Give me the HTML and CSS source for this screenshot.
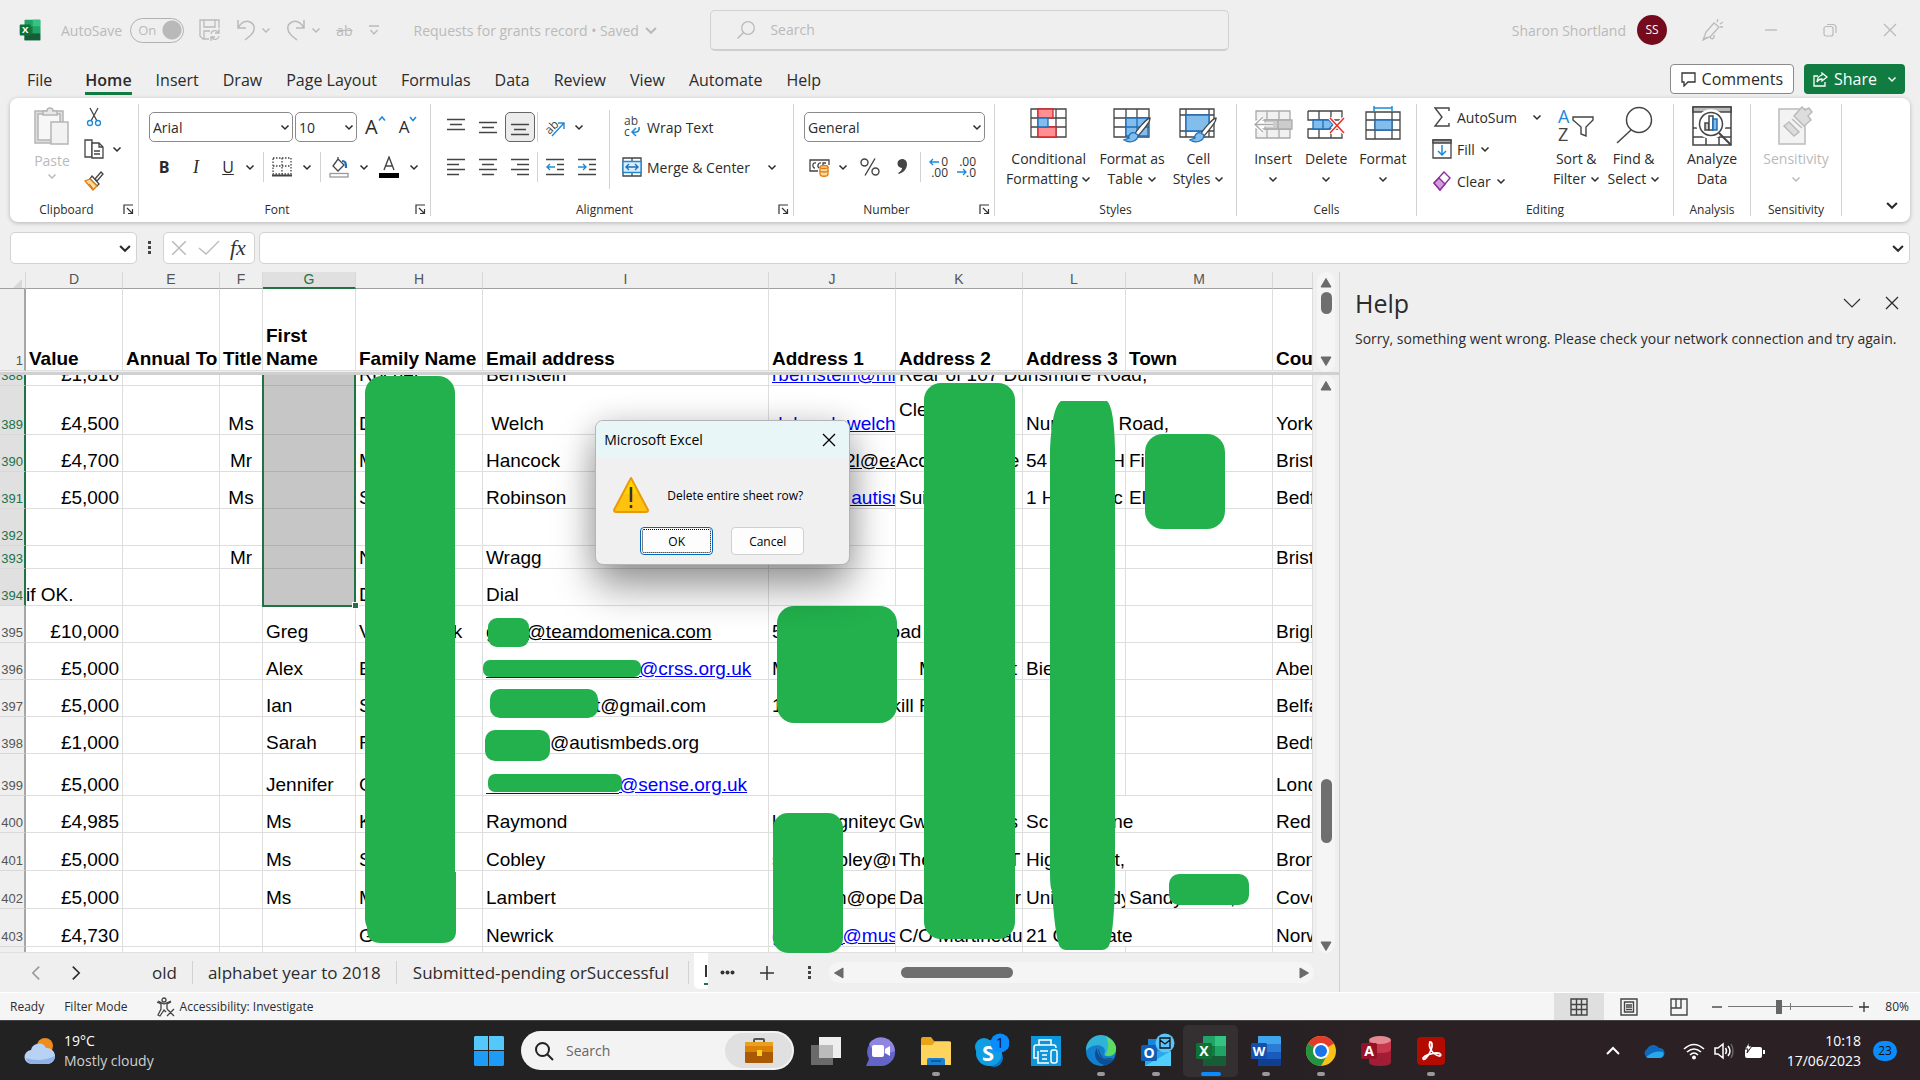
FILE: index.html
```html
<!DOCTYPE html>
<html lang="en">
  <head>
    <meta charset="UTF-8" />
    <meta name="viewport" content="width=device-width, initial-scale=1.0" />
    <title>Requests for grants record - Excel</title>
    <link rel="stylesheet" href="styles.css">
  </head>
  <body>
    <!-- shared icons -->
    <svg class="defs" width="0" height="0" aria-hidden="true">
      <symbol id="chev" viewBox="0 0 10 10"><path d="M1.5 3.5 5 7l3.5-3.5" fill="none" stroke="currentColor" stroke-width="1.5" /></symbol>
      <symbol id="thin" viewBox="0 0 10 10"><path d="M1 3 5 7l4-4" fill="none" stroke="currentColor" stroke-width="1" /></symbol>
      <symbol id="cross" viewBox="0 0 16 16"><path d="M2 2l12 12M14 2 2 14" fill="none" stroke="currentColor" stroke-width="1.3" /></symbol>
      <symbol id="launch" viewBox="0 0 11 11"><path d="M1 10V1h9M4 4l5 5M9.500 5v4.500H5" fill="none" stroke="#333" stroke-width="1.2" /></symbol>
      <symbol id="lens" viewBox="0 0 20 20"><circle cx="12" cy="8" r="6.300" fill="none" stroke="currentColor" stroke-width="1.300" /><path d="M7.500 12.500 1.500 18.500" stroke="currentColor" stroke-width="1.500" /></symbol>
      <symbol id="up" viewBox="0 0 12 12"><path d="M6 1.500 11 10H1z" fill="#6b6b6b" stroke="#6b6b6b" stroke-linejoin="round" /></symbol>
      <symbol id="excel" viewBox="0 0 32 32">
        <path d="M9 1h21a1 1 0 0 1 1 1v28a1 1 0 0 1-1 1H9a1 1 0 0 1-1-1V2a1 1 0 0 1 1-1z" fill="#21a366" />
        <path d="M20 1h11v10H20z" fill="#33c481" /><path d="M8 11h12v10H8z" fill="#107c41" /><path d="M20 11h11v10H20z" fill="#21a366" /><path d="M8 21h23v10H8z" fill="#185c37" />
        <rect x="1" y="8" width="16" height="16" rx="1.500" fill="#0f7038" />
        <text x="9" y="21" font-size="14" font-weight="700" fill="#fff" text-anchor="middle">X</text>
      </symbol>
    </svg>

    <header class="titlebar">
      <div class="quick">
        <svg width="22" height="22"><use href="#excel" /></svg>
        <label class="autosave">AutoSave
          <span class="switch"><input type="checkbox" checked /><span>On</span></span>
        </label>
        <button aria-label="Save"><svg width="22" height="22" viewBox="0 0 22 22" fill="none" stroke="currentColor" stroke-width="1.300"><path d="M10 20H4l-3-3V1h19v8M5 1v7h11V1M5 20v-8h6M12 15a4 4 0 0 1 7-2l1 1M20 10v4h-4M20 17a4 4 0 0 1-7 2l-1-1M12 22v-4h4" /></svg></button>
        <button aria-label="Undo"><svg width="20" height="22" viewBox="0 0 20 22" fill="none" stroke="currentColor" stroke-width="1.500"><path d="M2 1v8h8M2 9C5 4 9 1 14 3c6 3 5 9 1 13l-6 5" /></svg><svg width="10" height="10"><use href="#chev" /></svg></button>
        <button aria-label="Redo"><svg width="20" height="22" viewBox="0 0 20 22" fill="none" stroke="currentColor" stroke-width="1.500"><path d="M18 1v8h-8M18 9C15 4 11 1 6 3c-6 3-5 9-1 13l6 5" /></svg><svg width="10" height="10"><use href="#chev" /></svg></button>
        <button class="strike">ab</button>
        <button aria-label="Customize"><svg width="12" height="12" viewBox="0 0 12 12" fill="none" stroke="currentColor" stroke-width="1.300"><path d="M1 2h10M2.500 6 6 10l3.500-4" /></svg></button>
        <button class="docname">Requests for grants record • Saved <svg width="14" height="14"><use href="#chev" /></svg></button>
      </div>
      <label class="search"><svg width="20" height="20"><use href="#lens" /></svg><input type="search" placeholder="Search" /></label>
      <div class="window-tools">
        <span>Sharon Shortland</span>
        <span class="avatar">SS</span>
        <button aria-label="Draw"><svg width="22" height="22" viewBox="0 0 22 22" fill="none" stroke="currentColor" stroke-width="1.300"><path d="M13 4l5 4-8 9-8 4 3-8zM2 21l4-3M9 18c1 3 5 2 4-2M16 3l1-3M19 5l3-2M19 8h3" /></svg></button>
        <button aria-label="Minimize"><svg width="14" height="14" viewBox="0 0 14 14"><path d="M1 7h12" stroke="currentColor" stroke-width="1.300" /></svg></button>
        <button aria-label="Restore"><svg width="14" height="14" viewBox="0 0 14 14" fill="none" stroke="currentColor" stroke-width="1.200"><rect x="1" y="3.500" width="9" height="9.500" rx="2" /><path d="M4 1.500h6a3 3 0 0 1 3 3V10" /></svg></button>
        <button aria-label="Close"><svg width="16" height="16"><use href="#cross" /></svg></button>
      </div>
    </header>

    <nav class="tabs">
      <a href="#" class="file">File</a><a href="#" class="active">Home</a><a href="#">Insert</a><a href="#">Draw</a><a href="#">Page Layout</a><a href="#">Formulas</a><a href="#">Data</a><a href="#">Review</a><a href="#">View</a><a href="#">Automate</a><a href="#">Help</a>
      <div class="tab-actions">
        <button class="comments"><svg width="15" height="15" viewBox="0 0 15 15" fill="none" stroke="#333" stroke-width="1.300"><path d="M1 1h13v9H7l-4 4v-4H1z" /></svg>Comments</button>
        <button class="share"><svg width="15" height="15" viewBox="0 0 15 15" fill="none" stroke="#fff" stroke-width="1.300"><path d="M5 4H1v10h11v-4M9 1l5 4-5 4V7C6 7 5 8 4 10c0-4 2-6 5-7z" /></svg>Share<svg class="drop" width="10" height="10"><use href="#chev" /></svg></button>
      </div>
    </nav>

    <section class="ribbon">
      <div class="group clipboard">
        <div class="body">
          <button class="big off"><svg width="36" height="40" viewBox="0 0 36 40" fill="#e8e8e8" stroke="#b5b5b5" stroke-width="1.500"><path d="M1 5h28v32H1z" fill="#dedede" /><path d="M4 8h22v26H4z" fill="#f7f7f7" /><path d="M9 9V5h4a3 3 0 0 1 6 0h4v4z" /><path d="M17 16h17v22H17z" fill="#f2f2f2" /></svg>Paste<svg width="10" height="10"><use href="#chev" /></svg></button>
          <div class="stack">
            <button aria-label="Cut"><svg width="20" height="20" viewBox="0 0 20 20" fill="none" stroke="#444" stroke-width="1.300"><path d="M6 1l7 13M14 1 7 14" /><circle cx="6" cy="16" r="2.500" stroke="#1e8ad6" /><circle cx="14" cy="16" r="2.500" stroke="#1e8ad6" /></svg></button>
            <button aria-label="Copy"><svg width="20" height="20" viewBox="0 0 20 20" fill="#fff" stroke="#444" stroke-width="1.300"><path d="M1 1h7v17H1z" /><path d="M8 4h7l4 4v11H8zM15 4v4h4" /><path d="M10 12h6M10 15h6" /></svg><svg width="10" height="10"><use href="#chev" /></svg></button>
            <button aria-label="Format Painter"><svg width="20" height="20" viewBox="0 0 20 20" fill="#fff" stroke="#444" stroke-width="1.300"><path d="M11 8l6-7 2 2-6 7z" /><path d="M8 5l7 8-2 2-7-7z" /><path d="M6 8l7 7-4 4L1 10z" fill="#fbdc9a" stroke="#e07a10" /><path d="M5 13l4 5" stroke="#e07a10" /></svg></button>
          </div>
        </div>
        <footer>Clipboard<button aria-label="Clipboard settings"><svg width="11" height="11"><use href="#launch" /></svg></button></footer>
      </div>

      <div class="group font">
        <div class="body rows">
          <div class="row">
            <span class="combo wide"><select aria-label="Font"><option>Arial</option></select><svg width="10" height="10"><use href="#chev" /></svg></span>
            <span class="combo size"><select aria-label="Font size"><option>10</option></select><svg width="10" height="10"><use href="#chev" /></svg></span>
            <button class="grow">A<svg width="8" height="8" viewBox="0 0 8 8"><path d="M1 5.500 4 2l3 3.500" fill="none" stroke="#1e8ad6" stroke-width="1.500" /></svg></button>
            <button class="grow small">A<svg width="8" height="8" viewBox="0 0 8 8"><path d="M1 2l3 3.500L7 2" fill="none" stroke="#1e8ad6" stroke-width="1.500" /></svg></button>
          </div>
          <div class="row letters">
            <button class="b">B</button><button class="i">I</button><button class="u">U</button><svg width="10" height="10"><use href="#chev" /></svg><i class="bar"></i>
            <button aria-label="Borders"><svg width="20" height="20" viewBox="0 0 20 20" fill="none" stroke="#444" stroke-width="1.300"><path d="M1 1h18v16H1zM10 1v16M1 9h18" stroke-dasharray="1.500 1.500" /><path d="M0 18.500h20" stroke-width="2" /></svg></button><svg width="10" height="10"><use href="#chev" /></svg><i class="bar"></i>
            <button aria-label="Fill Color"><svg width="20" height="22" viewBox="0 0 20 22" fill="none" stroke="#444" stroke-width="1.300"><path d="M9 3l6 6-6 6-5-5zM9 3V1" /><path d="M13 5c4 0 4 3 4 7" stroke="#1e6fb8" stroke-width="2.200" /><rect x="1" y="17.500" width="18" height="3.500" stroke="#999" /></svg></button><svg width="10" height="10"><use href="#chev" /></svg>
            <button aria-label="Font Color"><svg width="20" height="22" viewBox="0 0 20 22"><path d="M5 14 10 1l5 13M7 10h6" fill="none" stroke="#444" stroke-width="1.400" /><path d="M0 17h20v5H0z" /></svg></button><svg width="10" height="10"><use href="#chev" /></svg>
          </div>
        </div>
        <footer>Font<button aria-label="Font settings"><svg width="11" height="11"><use href="#launch" /></svg></button></footer>
      </div>

      <div class="group alignment">
        <div class="body">
          <div class="rows">
            <div class="row lines">
              <button aria-label="Top"><svg width="18" height="18" viewBox="0 0 18 18"><path d="M0 1.500h18M3 6.500h12M0 11.500h18" stroke="#444" stroke-width="1.300" /></svg></button>
              <button aria-label="Middle"><svg width="18" height="18" viewBox="0 0 18 18"><path d="M0 4.500h18M3 9.500h12M0 14.500h18" stroke="#444" stroke-width="1.300" /></svg></button>
              <button aria-label="Bottom" class="on"><svg width="18" height="20" viewBox="0 0 18 20"><path d="M0 7.500h18M3 12.500h12M0 17.500h18" stroke="#444" stroke-width="1.300" /></svg></button>
              <i class="bar"></i>
              <button aria-label="Orientation"><svg width="20" height="20" viewBox="0 0 20 20"><text x="0" y="15" font-size="12" fill="#444" transform="rotate(-45 6 11)">ab</text><path d="M7 19 19 6M13 6h6v6" fill="none" stroke="#1e8ad6" stroke-width="1.400" /></svg></button><svg width="10" height="10"><use href="#chev" /></svg>
            </div>
            <div class="row lines">
              <button aria-label="Left"><svg width="18" height="18" viewBox="0 0 18 18"><path d="M0 1.500h18M0 6.500h12M0 11.500h18M0 16.500h12" stroke="#444" stroke-width="1.300" /></svg></button>
              <button aria-label="Center"><svg width="18" height="18" viewBox="0 0 18 18"><path d="M0 1.500h18M3 6.500h12M0 11.500h18M3 16.500h12" stroke="#444" stroke-width="1.300" /></svg></button>
              <button aria-label="Right"><svg width="18" height="18" viewBox="0 0 18 18"><path d="M0 1.500h18M6 6.500h12M0 11.500h18M6 16.500h12" stroke="#444" stroke-width="1.300" /></svg></button>
              <i class="bar"></i>
              <button aria-label="Decrease indent"><svg width="18" height="18" viewBox="0 0 18 18"><path d="M0 1.500h18M11 6.500h7M11 11.500h7M0 16.500h18" stroke="#444" stroke-width="1.300" /><path d="M9 9H1M4 6 1 9l3 3" fill="none" stroke="#1e8ad6" stroke-width="1.400" /></svg></button>
              <button aria-label="Increase indent"><svg width="18" height="18" viewBox="0 0 18 18"><path d="M0 1.500h18M11 6.500h7M11 11.500h7M0 16.500h18" stroke="#444" stroke-width="1.300" /><path d="M0 9h8M5 6l3 3-3 3" fill="none" stroke="#1e8ad6" stroke-width="1.400" /></svg></button>
            </div>
          </div>
          <div class="rows wrap">
            <button class="row"><svg width="20" height="22" viewBox="0 0 20 22"><text x="2" y="9" font-size="12" fill="#444">ab</text><text x="2" y="20" font-size="12" fill="#444">c</text><path d="M17 11c1 4-2 6-6 5M14 12l-4 4 4 4" fill="none" stroke="#1e8ad6" stroke-width="1.500" /></svg>Wrap Text</button>
            <button class="row"><svg width="20" height="20" viewBox="0 0 20 20" fill="none" stroke="#444" stroke-width="1.300"><path d="M1 1h18v18H1zM10 1v3M10 16v3" /><path d="M1 4.500h18v11H1z" fill="#d9edfb" stroke="#1e8ad6" /><path d="M4 10h12M7 7l-3 3 3 3M13 7l3 3-3 3" stroke="#1e6fb8" /></svg>Merge &amp; Center<svg class="drop" width="10" height="10"><use href="#chev" /></svg></button>
          </div>
        </div>
        <footer>Alignment<button aria-label="Alignment settings"><svg width="11" height="11"><use href="#launch" /></svg></button></footer>
      </div>

      <div class="group number">
        <div class="body rows">
          <div class="row"><span class="combo format"><select aria-label="Number format"><option>General</option></select><svg width="10" height="10"><use href="#chev" /></svg></span></div>
          <div class="row nums">
            <button aria-label="Accounting"><svg width="21" height="20" viewBox="0 0 21 20" fill="none" stroke="#444" stroke-width="1.300"><path d="M9 14H1V3h19v5M7 6C3 5 3 11 6 11M12 6c-3-1-4 4-2 5M17 6h-3v3" /><path d="M11 10v7c0 3 8 3 8 0v-7" fill="#fbdc9a" stroke="#e07a10" /><ellipse cx="15" cy="10" rx="4" ry="1.500" fill="#fbdc9a" stroke="#e07a10" /><path d="M11 13.500c0 2 8 2 8 0" stroke="#e07a10" /></svg></button><svg width="10" height="10"><use href="#chev" /></svg>
            <button class="pct" aria-label="Percent"><svg width="20" height="20" viewBox="0 0 20 20" fill="none" stroke="#444" stroke-width="1.400"><circle cx="4.500" cy="5.500" r="3.500" /><circle cx="15.500" cy="14.500" r="3.500" /><path d="M15 1.500 5 18.500" /></svg></button>
            <button class="comma" aria-label="Comma"><svg width="12" height="18" viewBox="0 0 12 18"><path d="M6 1c6 0 7 8 1 13l-4 2-1-1c3-2 4-3 4-5C0 10 0 1 6 1z" fill="#444" /></svg></button>
            <i class="bar"></i>
            <button aria-label="Increase decimal"><svg width="20" height="22" viewBox="0 0 20 22"><path d="M10 6H1M4 3 1 6l3 3" fill="none" stroke="#1e8ad6" stroke-width="1.400" /><text x="19" y="10" font-size="12" fill="#333" text-anchor="end">0</text><text x="19" y="21" font-size="12" fill="#333" text-anchor="end">.00</text></svg></button>
            <button aria-label="Decrease decimal"><svg width="20" height="22" viewBox="0 0 20 22"><path d="M0 16h9M6 13l3 3-3 3" fill="none" stroke="#1e8ad6" stroke-width="1.400" /><text x="19" y="10" font-size="12" fill="#333" text-anchor="end">.00</text><text x="19" y="21" font-size="12" fill="#333" text-anchor="end">.0</text></svg></button>
          </div>
        </div>
        <footer>Number<button aria-label="Number settings"><svg width="11" height="11"><use href="#launch" /></svg></button></footer>
      </div>

      <div class="group styles">
        <div class="body">
          <button class="big"><svg width="38" height="38" viewBox="0 0 38 38" fill="none" stroke="#444" stroke-width="1.300"><path d="M1 3h35v28H1zM1 12h35M1 21h35M8 3v28M26 3v28" /><path d="M8 3h15v9H8zM8 21h18v10H8z" fill="#ff8f92" stroke="#d8252b" /><path d="M8 12h10v9H8z" fill="#83bdeb" stroke="#1e6fb8" /></svg>Conditional<br>Formatting <svg width="10" height="10"><use href="#chev" /></svg></button>
          <button class="big"><svg width="38" height="38" viewBox="0 0 38 38" fill="none" stroke="#444" stroke-width="1.300"><path d="M1 3h35v28H1zM13 3v28M24 3v9M1 12h35M1 21h35" /><path d="M13 12h22v18H13zM24 12v18M13 21h22" fill="#83bdeb" stroke="#1e6fb8" /><path d="M37 12c-3 0-14 13-15 16l3 2c4-5 13-14 12-18z" fill="#fff" /><path d="M22 27c-5-2-7 4-6 5l-5 2c6 4 14 1 14-5z" fill="#83bdeb" stroke="#1e6fb8" /></svg>Format as<br>Table <svg width="10" height="10"><use href="#chev" /></svg></button>
          <button class="big"><svg width="38" height="38" viewBox="0 0 38 38" fill="none" stroke="#444" stroke-width="1.300"><path d="M1 3h34v28H1zM7 3v28M30 3v28M1 9h34M1 25h34" /><path d="M7 9h23v16H7z" fill="#83bdeb" stroke="#1e6fb8" /><path d="M37 12c-3 0-14 13-15 16l3 2c4-5 13-14 12-18z" fill="#fff" /><path d="M22 27c-5-2-7 4-6 5l-5 2c6 4 14 1 14-5z" fill="#83bdeb" stroke="#1e6fb8" /></svg>Cell<br>Styles <svg width="10" height="10"><use href="#chev" /></svg></button>
        </div>
        <footer>Styles</footer>
      </div>

      <div class="group cells">
        <div class="body">
          <button class="big"><svg width="40" height="38" viewBox="0 0 40 38" fill="#f1f1f1" stroke="#aaa" stroke-width="1.300"><path d="M3 5h34v9H3zM3 23h34v9H3zM14 5v9M26 5v9M14 23v9M26 23v9" /><path d="M12 14h27v9H12zM25 14v9" fill="#ccc" /><path d="M20 18.500H2M10 11l-8 7.500 8 7.500" fill="none" stroke="#fff" stroke-width="4" /><path d="M20 18.500H2M10 11l-8 7.500 8 7.500" fill="none" /></svg>Insert<br><svg width="10" height="10"><use href="#chev" /></svg></button>
          <button class="big"><svg width="40" height="38" viewBox="0 0 40 38" fill="none" stroke="#444" stroke-width="1.300"><path d="M2 5h34v9M2 5v9h34M2 32v-9h34M2 32h34v-9M13 5v9M25 5v9M13 23v9M25 23v9" /><path d="M7 14h16l4 4.500-4 4.500H7zM17 14v9" fill="#83bdeb" stroke="#1e6fb8" /><path d="M24 12l14 15M38 12 24 27" stroke="#fff" stroke-width="4" /><path d="M24 12l14 15M38 12 24 27" stroke="#e8332c" stroke-width="1.600" /></svg>Delete<br><svg width="10" height="10"><use href="#chev" /></svg></button>
          <button class="big"><svg width="40" height="38" viewBox="0 0 40 38" fill="none" stroke="#444" stroke-width="1.300"><path d="M3 6h34v27H3zM3 14h34M3 24h34M12 6v27M29 6v27" /><path d="M12 14h17v10H12z" fill="#83bdeb" stroke="#1e6fb8" /><path d="M11 2h18M11 0v5M29 0v5" stroke="#1e8ad6" stroke-width="1.500" /></svg>Format<br><svg width="10" height="10"><use href="#chev" /></svg></button>
        </div>
        <footer>Cells</footer>
      </div>

      <div class="group editing">
        <div class="body">
          <div class="stack text">
            <button><svg width="20" height="20" viewBox="0 0 20 20" fill="none" stroke="#444" stroke-width="1.400"><path d="M17 4V1H3l7 9-7 9h14v-3" /></svg>AutoSum<svg class="drop" width="10" height="10"><use href="#chev" /></svg></button>
            <button><svg width="20" height="20" viewBox="0 0 20 20" fill="none" stroke="#444" stroke-width="1.300"><path d="M1 1h18v18H1z" /><path d="M1 1h18v3H1z" fill="#aaa" /><path d="M10 6v10M6 12l4 4 4-4" stroke="#1e8ad6" stroke-width="1.500" /></svg>Fill<svg width="10" height="10"><use href="#chev" /></svg></button>
            <button><svg width="20" height="20" viewBox="0 0 20 20" fill="none" stroke="#8a2f9b" stroke-width="1.400"><path d="M12 1l6 6-10 12-6-7z" /><path d="M7 7l6 6-5 6-6-7z" fill="#d59be0" /></svg>Clear<svg width="10" height="10"><use href="#chev" /></svg></button>
          </div>
          <button class="big"><svg width="38" height="38" viewBox="0 0 38 38"><text x="1" y="17" font-size="18" fill="#1e8ad6">A</text><text x="1" y="35" font-size="18" fill="#444">Z</text><path d="M16 11h20v3l-7 7v9l-5-2v-7l-8-7z" fill="none" stroke="#444" stroke-width="1.400" /></svg>Sort &amp;<br>Filter <svg width="10" height="10"><use href="#chev" /></svg></button>
          <button class="big"><svg width="38" height="38" viewBox="0 0 38 38" fill="none" stroke="#444" stroke-width="1.500"><circle cx="24" cy="14" r="12.500" /><path d="M16 24 2 37" /></svg>Find &amp;<br>Select <svg width="10" height="10"><use href="#chev" /></svg></button>
        </div>
        <footer>Editing</footer>
      </div>

      <div class="group analysis">
        <div class="body">
          <button class="big"><svg width="40" height="40" viewBox="0 0 40 40" fill="none" stroke="#444" stroke-width="1.500"><path d="M1 1h38v38H1zM1 22h38M1 31h38M14 22v17M27 22v17" /><path d="M1 1h38v5H1z" fill="#bbb" /><circle cx="19" cy="18" r="14" fill="#fff" stroke="#fff" /><circle cx="19" cy="18" r="11.500" fill="#fff" /><path d="M27 27l12 12" stroke-width="2" /><path d="M13 17h4v7h-4z" fill="#ccc" /><path d="M17 10h4v14h-4z" fill="#fff" /><path d="M21 13h4v11h-4z" fill="#83bdeb" stroke="#1e6fb8" /></svg>Analyze<br>Data</button>
        </div>
        <footer>Analysis</footer>
      </div>

      <div class="group sensitivity">
        <div class="body">
          <button class="big off"><svg width="36" height="40" viewBox="0 0 36 40" fill="#f3f3f3" stroke="#bbb" stroke-width="1.500"><path d="M1 3h26v35H1z" /><path d="M6 20l5-4 10 10-5 4z" fill="#ddd" /><path d="M16 10l8-9 3 3 4-2 3 4-4 4 3 4-7 6z" fill="#ddd" /><path d="M14 13l10 9" /></svg>Sensitivity<br><svg width="10" height="10"><use href="#chev" /></svg></button>
        </div>
        <footer>Sensitivity</footer>
      </div>
      <button class="collapse" aria-label="Collapse ribbon"><svg width="14" height="14"><use href="#chev" /></svg></button>
    </section>

    <section class="formula-bar">
      <label class="name-box"><input type="text" aria-label="Name box" /><svg width="14" height="14"><use href="#chev" /></svg></label>
      <svg width="6" height="16" viewBox="0 0 6 16"><path d="M1 1h3v3H1zM1 6h3v3H1zM1 11h3v3H1z" fill="#444" /></svg>
      <div class="fx-box">
        <button aria-label="Cancel entry"><svg width="18" height="18"><use href="#cross" /></svg></button>
        <button aria-label="Enter"><svg width="22" height="18" viewBox="0 0 22 18"><path d="M1 9l7 6L21 2" fill="none" stroke="currentColor" stroke-width="1.300" /></svg></button>
        <button class="fx">fx</button>
      </div>
      <label class="formula"><input type="text" aria-label="Formula" /><svg width="14" height="14"><use href="#chev" /></svg></label>
    </section>

    <main class="workspace">
      <div class="book">
        <div class="panes">
          <div class="pane top">
            <div class="grid">
              <table>
                <colgroup><col class="c-num"><col class="c-d"><col class="c-d"><col class="c-f"><col class="c-g"><col class="c-h"><col class="c-i"><col class="c-h"><col class="c-h"><col class="c-l"><col class="c-m"><col></colgroup>
                <thead>
                  <tr><th class="corner"><svg width="9" height="9" viewBox="0 0 9 9"><path d="M9 0v9H0z" fill="#d8d8d8" /></svg></th><th>D</th><th>E</th><th>F</th><th class="sel">G</th><th>H</th><th>I</th><th>J</th><th>K</th><th>L</th><th>M</th><th></th></tr>
                </thead>
                <tbody>
                  <tr class="titles"><th>1</th><td>Value</td><td>Annual To</td><td>Title</td><td>First<br>Name</td><td>Family Name</td><td>Email address</td><td>Address 1</td><td>Address 2</td><td>Address 3</td><td>Town</td><td>Cou</td></tr>
                </tbody>
              </table>
            </div>
            <div class="vscroll"><svg width="12" height="12"><use href="#up" /></svg><i class="thumb"></i><i class="rest"></i><svg class="down" width="12" height="12"><use href="#up" /></svg></div>
          </div>
          <div class="pane bottom">
            <div class="grid">
              <table>
                <colgroup><col class="c-num"><col class="c-d"><col class="c-d"><col class="c-f"><col class="c-g"><col class="c-h"><col class="c-i"><col class="c-h"><col class="c-h"><col class="c-l"><col class="c-m"><col></colgroup>
                <tbody>
                  <tr class="sel"><th>388</th><td>£1,810</td><td></td><td></td><td></td><td>Rochel</td><td>Bernstein</td><td><a href="#">rbernstein@mi</a></td><td colspan="3">Rear of 107 Dunsmure Road,</td><td></td></tr>
                  <tr class="sel tall"><th>389</th><td>£4,500</td><td></td><td>Ms</td><td></td><td>D</td><td>&nbsp;Welch</td><td><a href="#">deborah.welch</a></td><td class="mid">Cle</td><td colspan="2">Nur<i class="gap g47"></i>s Road,</td><td>York</td></tr>
                  <tr class="sel"><th>390</th><td>£4,700</td><td></td><td>Mr</td><td></td><td>M</td><td>Hancock</td><td><i class="gap g73"></i><u>2l@ea</u></td><td class="flush">Acc<i class="gap g81"></i>e</td><td>54<i class="gap g64"></i>H</td><td>Fi</td><td>Brist</td></tr>
                  <tr class="sel"><th>391</th><td>£5,000</td><td></td><td>Ms</td><td></td><td>S</td><td>Robinson</td><td><i class="gap g60"></i><a href="#">@autisr</a></td><td>Sui</td><td>1 H<i class="gap g47"></i>nc</td><td>El</td><td>Bedf</td></tr>
                  <tr class="sel"><th>392</th><td></td><td></td><td></td><td></td><td></td><td></td><td></td><td></td><td></td><td></td><td></td></tr>
                  <tr class="sel short"><th>393</th><td></td><td></td><td>Mr</td><td></td><td>N</td><td>Wragg</td><td></td><td></td><td></td><td></td><td>Brist</td></tr>
                  <tr class="sel"><th>394</th><td class="flush">if OK.</td><td></td><td></td><td></td><td>D</td><td>Dial</td><td></td><td></td><td></td><td></td><td></td></tr>
                  <tr><th>395</th><td>£10,000</td><td></td><td></td><td>Greg</td><td>V<i class="gap g81"></i>k</td><td><u>g</u><i class="gap g30"></i><u>@teamdomenica.com</u></td><td colspan="2">5<i class="gap g107"></i>oad</td><td></td><td></td><td>Brigh</td></tr>
                  <tr><th>396</th><td>£5,000</td><td></td><td></td><td>Alex</td><td>E</td><td><a href="#"><i class="gap g153"></i>@crss.org.uk</a></td><td>M</td><td><i class="gap g20"></i>M<i class="gap g77"></i>t</td><td>Bie</td><td></td><td>Aber</td></tr>
                  <tr><th>397</th><td>£5,000</td><td></td><td></td><td>Ian</td><td>S</td><td><i class="gap g109"></i>t@gmail.com</td><td colspan="2">1<i class="gap g109"></i>kill F</td><td></td><td></td><td>Belfa</td></tr>
                  <tr><th>398</th><td>£1,000</td><td></td><td></td><td>Sarah</td><td>F</td><td><i class="gap g64"></i>@autismbeds.org</td><td></td><td></td><td></td><td></td><td>Bedf</td></tr>
                  <tr class="mid-tall"><th>399</th><td>£5,000</td><td></td><td></td><td>Jennifer</td><td>G</td><td><a href="#"><i class="gap g133"></i>@sense.org.uk</a></td><td></td><td></td><td></td><td></td><td>Lond</td></tr>
                  <tr><th>400</th><td>£4,985</td><td></td><td></td><td>Ms</td><td>K</td><td>Raymond</td><td>k<i class="gap g56"></i>gniteyo</td><td>Gw<i class="gap g81"></i>s</td><td colspan="2">Sc<i class="gap g64"></i>ne</td><td>Red</td></tr>
                  <tr class="wide-row"><th>401</th><td>£5,000</td><td></td><td></td><td>Ms</td><td>S</td><td>Cobley</td><td>s<i class="gap g56"></i>bley@r</td><td>The<i class="gap g77"></i>T</td><td colspan="2">Hig<i class="gap g60"></i>t,</td><td>Bron</td></tr>
                  <tr class="wide-row"><th>402</th><td>£5,000</td><td></td><td></td><td>Ms</td><td>M</td><td>Lambert</td><td><i class="gap g64"></i>n@ope</td><td>Da<i class="gap g81"></i>er</td><td>Uni<i class="gap g56"></i>dy</td><td>Sandy<i class="gap g47"></i>,</td><td>Cove</td></tr>
                  <tr class="wide-row"><th>403</th><td>£4,730</td><td></td><td></td><td></td><td>G</td><td>Newrick</td><td><a href="#">g<i class="gap g60"></i>@mus</a></td><td>C/O Martineau</td><td colspan="2">21 C<i class="gap g40"></i>ate</td><td>Norw</td></tr>
                  <tr><th></th><td></td><td></td><td></td><td></td><td></td><td></td><td></td><td></td><td></td><td></td><td></td></tr>
                </tbody>
              </table>
            </div>
            <div class="vscroll"><svg width="12" height="12"><use href="#up" /></svg><i class="before"></i><i class="thumb"></i><i class="after"></i><svg class="down" width="12" height="12"><use href="#up" /></svg></div>
          </div>

          <!-- selection outline and painted-over areas, in sheet coordinates -->
          <svg class="overlay" width="1313" height="682" viewBox="0 0 1313 682">
            <path d="M263 103v231h92V103" fill="none" stroke="#217346" stroke-width="2" />
            <rect x="352.500" y="330.500" width="6" height="6" fill="#217346" stroke="#fff" />
            <g fill="#22b14c">
              <rect x="365" y="104" width="90" height="560" rx="17" />
              <path d="M365 600h91v59q0 12-14 12h-61q-14 0-14-14v-20q-2-3-2-20z" />
              <rect x="924" y="111" width="91" height="556" rx="17" />
              <path d="M1061 129h46q7 6 8 48v436q-1 40-5 58-2 7-8 7h-36q-6 0-8-8-4-18-6-52-2 0-2-20V177q2-42 11-48z" />
              <rect x="1145" y="162" width="80" height="95" rx="18" />
              <rect x="777" y="334" width="120" height="117" rx="17" />
              <rect x="773" y="541" width="70" height="140" rx="15" />
              <rect x="1169" y="602" width="80" height="31" rx="10" />
              <rect x="488" y="346" width="41" height="29" rx="9" />
              <rect x="483" y="388" width="158" height="17" rx="7" />
              <rect x="490" y="417" width="108" height="29" rx="10" />
              <rect x="485" y="458" width="65" height="31" rx="10" />
              <rect x="488" y="502" width="134" height="18" rx="7" />
            </g>
          </svg>
        </div>

        <div class="sheet-tabs">
          <button class="prev" aria-label="Previous sheet"><svg width="16" height="16"><use href="#thin" /></svg></button>
          <button class="next" aria-label="Next sheet"><svg width="16" height="16"><use href="#thin" /></svg></button>
          <a href="#" class="old">old</a><a href="#">alphabet year to 2018</a><a href="#" class="last">Submitted-pending orSuccessful</a>
          <span class="current"></span>
          <button aria-label="More sheets"><svg width="15" height="5" viewBox="0 0 15 5" fill="#333"><circle cx="2.500" cy="2.500" r="2" /><circle cx="7.500" cy="2.500" r="2" /><circle cx="12.500" cy="2.500" r="2" /></svg></button>
          <button class="add" aria-label="New sheet"><svg width="16" height="16" viewBox="0 0 16 16"><path d="M8 1v14M1 8h14" stroke="#333" stroke-width="1.500" /></svg></button>
          <svg width="6" height="16" viewBox="0 0 6 16"><path d="M1 1h3v3H1zM1 6h3v3H1zM1 11h3v3H1z" fill="#444" /></svg>
          <div class="hscroll"><svg class="left" width="12" height="12"><use href="#up" /></svg><i class="before"></i><i class="thumb"></i><i class="after"></i><svg class="right" width="12" height="12"><use href="#up" /></svg></div>
        </div>
      </div>

      <aside class="help">
        <header><h2>Help</h2>
          <button aria-label="Pane options"><svg width="20" height="20" viewBox="0 0 20 20"><path d="M2 6l8 8 8-8" fill="none" stroke="#333" stroke-width="1.200" /></svg></button>
          <button aria-label="Close pane"><svg width="16" height="16"><use href="#cross" /></svg></button>
        </header>
        <p>Sorry, something went wrong. Please check your network connection and try again.</p>
      </aside>
    </main>

    <div class="dialog" role="dialog" aria-labelledby="dlg-title">
      <header><span id="dlg-title">Microsoft Excel</span><button aria-label="Close"><svg width="16" height="16"><use href="#cross" /></svg></button></header>
      <div class="message">
        <svg width="38" height="38" viewBox="0 0 38 38"><path d="M19 2 36 34q0 2-2 2H4q-2 0-2-2z" fill="#ffc20e" stroke="#e89a0c" stroke-width="2" stroke-linejoin="round" /><path d="M19 4 12 18h14z" fill="#ffd500" /><path d="M19 11v15M19 29v3" stroke="#333" stroke-width="2.500" /></svg>
        <p>Delete entire sheet row?</p>
      </div>
      <div class="choices"><button class="ok">OK</button><button>Cancel</button></div>
    </div>

    <footer class="status">
      <span>Ready</span><span class="filter">Filter Mode</span>
      <svg width="20" height="20" viewBox="0 0 20 20" fill="none" stroke="#444" stroke-width="1.300"><circle cx="8" cy="3" r="2" /><path d="M1 5l4 2v5l-3 6 2 1 4-6 2 2M15 5l-4 2v5M2 4l6 3 7-3M11 12l7 7M18 12l-7 7" /></svg>
      <span>Accessibility: Investigate</span>
      <div class="views">
        <button class="on" aria-label="Normal"><svg width="18" height="18" viewBox="0 0 18 18" fill="none" stroke="#444" stroke-width="1.400"><path d="M1 1h16v16H1zM1 6.500h16M1 11.500h16M6.500 1v16M11.500 1v16" /></svg></button>
        <button aria-label="Page layout"><svg width="18" height="18" viewBox="0 0 18 18" fill="none" stroke="#444" stroke-width="1.400"><path d="M1 1h16v16H1zM4.500 4h9v10h-9zM6 7h6M6 9h6M6 11.500h6" /></svg></button>
        <button aria-label="Page break"><svg width="18" height="18" viewBox="0 0 18 18" fill="none" stroke="#444" stroke-width="1.400"><path d="M1 1h16v16H1zM1 10h10V1M6 1v9" /></svg></button>
      </div>
      <button class="step" aria-label="Zoom out"><svg width="12" height="12" viewBox="0 0 12 12"><path d="M1 6h10" stroke="#333" stroke-width="1.300" /></svg></button>
      <input class="zoom" type="range" min="10" max="190" value="82" aria-label="Zoom" />
      <button class="step" aria-label="Zoom in"><svg width="12" height="12" viewBox="0 0 12 12"><path d="M1 6h10M6 1v10" stroke="#333" stroke-width="1.300" /></svg></button>
      <span class="percent">80%</span>
    </footer>

    <footer class="taskbar">
      <div class="weather">
        <svg width="32" height="28" viewBox="0 0 32 28"><circle cx="21" cy="9" r="8" fill="#f08c1c" /><path d="M8 27a7 7 0 0 1-1-14 8 8 0 0 1 15-2 8 8 0 0 1 2 16z" fill="#b8d2f5" /><path d="M8 27a7 7 0 0 1-6-6q14 5 29-2a8 8 0 0 1-7 8z" fill="#8fb2e8" /></svg>
        <div>19°C<small>Mostly cloudy</small></div>
      </div>
      <div class="apps">
        <button class="start" aria-label="Start"><svg width="30" height="30" viewBox="0 0 30 30"><path d="M1 0h13v14H0V1zM15 0h14l1 1v13H15z" fill="#55c8fb" /><path d="M0 15h14v15H1l-1-1zM15 15h15v14l-1 1H15z" fill="#1e9bf5" /></svg></button>
        <label class="tb-search"><svg width="20" height="20" viewBox="0 0 20 20" fill="none" stroke="#222" stroke-width="2"><circle cx="8.500" cy="8.500" r="6.500" /><path d="M13 13l6 6" /></svg><input type="search" placeholder="Search" />
          <span class="bag"><svg width="30" height="26" viewBox="0 0 30 26"><path d="M10 4V2q0-1 1-1h8q1 0 1 1v2" fill="none" stroke="#555" stroke-width="2" /><rect x="1" y="4" width="28" height="21" rx="1" fill="#a85a05" /><path d="M1 4h28v10H1z" fill="#d98205" /><path d="M1 4h28v4H1z" fill="#e9a020" /><rect x="13" y="12" width="5" height="6" fill="#ffcf1f" /></svg></span></label>
        <button aria-label="Task view"><svg width="32" height="32" viewBox="0 0 32 32"><path d="M9 2h22v21H9z" fill="#eee" /><path d="M1 10h22v20H1z" fill="#777" fill-opacity=".85" /><path d="M9 10h14v13H9z" fill="#bbb" /></svg></button>
        <button aria-label="Chat"><svg width="32" height="32" viewBox="0 0 32 32"><path d="M1 31l3-7A14 14 0 1 1 16 31z" fill="#6264c7" /><path d="M4 9A14 14 0 0 1 30 16Q12 24 4 9z" fill="#8f86e0" /><rect x="7" y="10" width="12" height="12" rx="2" fill="#fff" /><path d="M20 14l5-3v10l-5-3z" fill="#fff" /></svg></button>
        <button class="run" aria-label="File Explorer"><svg width="32" height="32" viewBox="0 0 32 32"><path d="M1 4q0-2 2-2h8l3 4h15q2 0 2 2v20H1z" fill="#e8a317" /><path d="M1 10h11l3-3h16v23H1z" fill="#ffd45c" /><path d="M7 30v-5q0-2 2-2h14q2 0 2 2v5z" fill="#1a7fd1" /><path d="M11 26h10" stroke="#0f5a9c" stroke-width="2" /></svg></button>
        <button aria-label="Skype"><svg width="36" height="36" viewBox="0 0 36 36"><circle cx="11" cy="14" r="9" fill="#0c9fe2" /><circle cx="21" cy="25" r="9" fill="#0878d0" /><circle cx="16" cy="20" r="13" fill="#109de3" /><text x="15" y="28" font-size="22" font-weight="700" fill="#fff" text-anchor="middle">S</text><circle cx="27" cy="10" r="9.500" fill="#0a8cff" /><text x="27" y="15" font-size="14" fill="#111" text-anchor="middle">1</text></svg></button>
        <button aria-label="Print and scan"><svg width="30" height="30" viewBox="0 0 30 30" fill="none" stroke="#fff" stroke-width="1.500"><path d="M0 0h30v30H0z" fill="#0e96dc" stroke="none" /><path d="M8 9V4h12v5M5 9h18q2 0 2 3M5 9q-2 0-2 3v10h4M9 15h8M9 27H7V15M9 27h9M11 19h5M11 23h5" /><rect x="20" y="14" width="6" height="13" rx="2" /></svg></button>
        <button class="run" aria-label="Edge"><svg width="32" height="32" viewBox="0 0 32 32"><circle cx="16" cy="16" r="15" fill="#1380cf" /><path d="M1 16A15 15 0 0 1 31 14c0 6-5 8-10 7-3-1-1-3-1-6-2-7-14-6-19 1z" fill="#2fb4d8" /><path d="M21 2c7 2 11 8 10 13-1 6-8 7-11 5 4-5 4-12 1-18z" fill="#5edb63" /><path d="M12 13c-5 7 0 16 8 17 5-1 8-3 10-7-8 4-18 0-18-10z" fill="#0d4f96" /><path d="M14 13c-2 6 3 12 14 10-7 3-15-2-14-10z" fill="#222" /></svg></button>
        <button class="run" aria-label="Outlook"><svg width="38" height="36" viewBox="0 0 38 36"><path d="M11 6h20v12H11z" fill="#1a86d8" /><path d="M8 18h26v15H8z" fill="#28a8ea" /><path d="M8 33l26-15v15z" fill="#50d0ff" /><rect x="4" y="12" width="16" height="16" rx="1.500" fill="#0f5fb8" /><text x="12" y="25" font-size="14" font-weight="700" fill="#fff" text-anchor="middle">O</text><circle cx="28" cy="10" r="9.500" fill="#5cc4fb" /><path d="M23 5h10v10H23zM23 7l5 4 5-4" fill="none" stroke="#111" stroke-width="1.300" /></svg></button>
        <button class="run current-app" aria-label="Excel"><svg width="32" height="32"><use href="#excel" /></svg></button>
        <button class="run" aria-label="Word"><svg width="32" height="32" viewBox="0 0 32 32"><path d="M8 1h22l1 1v8H8z" fill="#41a5ee" /><path d="M8 9h23v8H8z" fill="#2b7cd3" /><path d="M8 17h23v7H8z" fill="#185abd" /><path d="M8 24h23v6l-1 1H8z" fill="#103f91" /><rect x="1" y="8" width="16" height="16" rx="1.500" fill="#1650ac" /><text x="9" y="21" font-size="13" font-weight="700" fill="#fff" text-anchor="middle">W</text></svg></button>
        <button class="run" aria-label="Chrome"><svg width="32" height="32" viewBox="0 0 32 32"><circle cx="16" cy="16" r="15" fill="#fbc116" /><path d="M16 16 3 8.500A15 15 0 0 1 29 8.500z" fill="#e33b2e" /><path d="M3 8.500A15 15 0 0 0 16 31l6.500-11.500L16 16z" fill="#229342" /><path d="M16 9h13.300a15 15 0 0 0-.3-.5z" fill="#e33b2e" /><circle cx="16" cy="16" r="8" fill="#fff" /><circle cx="16" cy="16" r="6" fill="#1a73e8" /></svg></button>
        <button aria-label="Access"><svg width="32" height="32" viewBox="0 0 32 32"><path d="M9 5v22q0 4 11 4t11-4V5z" fill="#a31c35" /><path d="M9 5v9q0 4 11 4t11-4V5z" fill="#c8394c" /><ellipse cx="20" cy="5" rx="11" ry="4" fill="#e58a93" /><rect x="1" y="8" width="16" height="16" rx="1.500" fill="#941128" /><text x="9" y="21" font-size="14" font-weight="700" fill="#fff" text-anchor="middle">A</text></svg></button>
        <button class="run" aria-label="Acrobat"><svg width="30" height="30" viewBox="0 0 30 30"><rect x="1" y="1" width="28" height="28" rx="4" fill="#b30b00" /><path d="M14 6c-2 5 2 12 9 14 3 0 2-3-2-3-5 0-12 2-14 5 0 3 4 1 8-8 2-5 1-8-1-8z" fill="none" stroke="#fff" stroke-width="1.800" /></svg></button>
      </div>
      <div class="tray">
        <svg width="16" height="16" viewBox="0 0 16 16"><path d="M2 11l6-6 6 6" fill="none" stroke="#fff" stroke-width="2" /></svg>
        <svg class="cloud" width="22" height="16" viewBox="0 0 22 16"><path d="M5 15a5 5 0 0 1-1-9 7 7 0 0 1 12-1 5 5 0 0 1 1 10z" fill="#1068bd" /><path d="M3 14q9-7 17-5a4 4 0 0 1-3 6H5z" fill="#28a8ea" /></svg>
        <svg width="22" height="18" viewBox="0 0 22 18" fill="none" stroke="#fff" stroke-width="1.600"><path d="M1 7q10-9 20 0M4 10q7-6 14 0M7 13q4-4 8 0" /><circle cx="11" cy="15.500" r="1.200" fill="#fff" /></svg>
        <svg width="22" height="18" viewBox="0 0 22 18" fill="none" stroke="#fff" stroke-width="1.500"><path d="M2 6h3l5-4v14l-5-4H2zM12.500 6q2 3 0 6M15 4q4 5 0 10" /><path d="M18 2q4 7 0 14" stroke="#666" /></svg>
        <svg width="22" height="18" viewBox="0 0 22 18"><path d="M4 5h13q2 0 2 2v7q0 2-2 2H4q-2 0-2-2V7q0-2 2-2zM20 8h2v4h-2z" fill="#fff" /><path d="M6 0 2 7h3l-1 4 5-7H6z" fill="#fff" stroke="#2b2125" /></svg>
        <div class="clock">10:18<br>17/06/2023</div>
        <span class="badge">23</span>
      </div>
    </footer>
  </body>
</html>
```

FILE: styles.css
```css
:root {
  --chrome: #efefef;
  --line: #d2d2d2;
  --text: #2b2b2b;
  --off: #bababa;
  --green: #217346;
}

* {
  box-sizing: border-box;
}

body {
  margin: 0;
  height: 100vh;
  display: flex;
  flex-direction: column;
  position: relative;
  overflow: hidden;
  background: var(--chrome);
  color: var(--text);
  font: 14px "Open Sans", "Noto Sans", sans-serif;
}

body > * {
  flex-shrink: 0;
}

.defs {
  position: absolute;
}

svg {
  flex: none;
}

button,
input,
select {
  font: inherit;
  color: inherit;
  border: 0;
  background: none;
  padding: 0;
  margin: 0;
  outline: none;
  min-width: 0;
}

button {
  display: inline-flex;
  align-items: center;
}

a {
  color: inherit;
  text-decoration: none;
}

/* title bar */
.titlebar {
  height: 60px;
  display: grid;
  grid-template-columns: 37fr 27fr 36fr;
  align-items: center;
  color: var(--off);
}

.quick {
  display: flex;
  align-items: center;
  gap: 15px;
  padding-left: 19px;
}

.quick button {
  gap: 5px;
}

.autosave {
  display: flex;
  align-items: center;
  gap: 8px;
  padding-left: 5px;
}

.switch {
  display: inline-grid;
  align-items: center;
}

.switch > * {
  grid-area: 1 / 1;
}

.switch span {
  padding-left: 8px;
  font-size: 13px;
}

.switch input {
  appearance: none;
  width: 54px;
  height: 25px;
  border: 1px solid #b0b0b0;
  border-radius: 13px;
  background: radial-gradient(circle at 41px 11px, #b9b9b9 9px, transparent 10px);
}

.strike {
  text-decoration: line-through;
}

.docname {
  margin-left: 19px;
  white-space: nowrap;
}

.titlebar .search {
  height: 41px;
  display: flex;
  align-items: center;
  gap: 14px;
  padding-left: 25px;
  border: 1px solid var(--line);
  border-bottom: 2px solid #cfcfcf;
  border-radius: 5px;
}

.search input::placeholder {
  color: var(--off);
}

.window-tools {
  display: flex;
  align-items: center;
  justify-content: flex-end;
  padding-right: 22px;
}

.window-tools button {
  margin-left: 45px;
}

.window-tools .avatar + button {
  margin-left: 34px;
}

.window-tools .avatar + button + button {
  margin-left: 41px;
}

.avatar {
  width: 30px;
  height: 30px;
  line-height: 30px;
  margin-left: 11px;
  border-radius: 50%;
  background: #750b1c;
  color: #fff;
  font-size: 12px;
  text-align: center;
}

/* menu tabs */
.tabs {
  height: 38px;
  display: flex;
  align-items: flex-start;
  gap: 24px;
  padding: 4px 15px 0 27px;
  font-size: 16px;
}

.tabs a {
  height: 31px;
  line-height: 32px;
  border-bottom: 3px solid transparent;
}

.tabs .file {
  margin-right: 9px;
}

.tabs a.active {
  font-weight: 600;
  border-color: #107c41;
}

.tab-actions {
  display: flex;
  gap: 10px;
  margin-left: auto;
}

.tab-actions button {
  height: 30px;
  gap: 6px;
  padding: 0 10px;
  border-radius: 4px;
}

.tab-actions .comments {
  background: #fff;
  border: 1px solid #8a8a8a;
}

.tab-actions .share {
  padding: 0 8px 0 9px;
  background: #107c41;
  color: #fff;
}

.share .drop {
  margin-left: 4px;
}

/* ribbon */
.ribbon {
  height: 124px;
  margin: 0 10px;
  display: flex;
  border-radius: 8px;
  background: #fff;
  box-shadow: 0 1px 4px rgba(0, 0, 0, 0.25);
}

.group {
  display: flex;
  flex-direction: column;
  margin: 6px 0;
  border-right: 1px solid var(--line);
}

.group .body {
  flex: 1;
  display: flex;
  align-items: flex-start;
}

.group footer {
  height: 20px;
  display: flex;
  align-items: center;
  justify-content: center;
  padding-top: 6px;
  font-size: 12px;
}

.group footer button {
  width: 0;
  margin-left: auto;
  padding-right: 15px;
}

.group footer:has(button)::before {
  content: "";
  margin-right: auto;
}

.clipboard { width: 129px; }
.font { width: 292px; }
.alignment { width: 363px; }
.number { width: 201px; }
.styles { width: 242px; }
.cells { width: 180px; }
.editing { width: 257px; }
.analysis { width: 77px; }
.sensitivity { width: 91px; }

.big {
  display: block;
  line-height: 20px;
  text-align: center;
  white-space: nowrap;
}

.big > svg:first-child {
  display: block;
  margin: 2px auto 5px;
}

.off {
  color: var(--off);
}

.clipboard .big {
  width: 62px;
  margin-left: 11px;
}

.clipboard .big > svg:last-child {
  display: block;
  margin: 0 auto;
}

.clipboard .stack {
  margin-left: 1px;
}

.stack {
  display: flex;
  flex-direction: column;
  gap: 12px;
  padding-top: 3px;
}

.stack button {
  height: 20px;
  gap: 8px;
}

.rows {
  display: flex;
  flex-direction: column;
  gap: 10px;
}

.group .rows {
  padding-top: 8px;
}

.group .body .row {
  display: flex;
  align-items: center;
  height: 30px;
}

.combo {
  display: inline-grid;
  align-items: center;
}

.combo > * {
  grid-area: 1 / 1;
}

.combo select {
  appearance: none;
  width: 100%;
  height: 30px;
  padding-left: 3px;
  border: 1px solid #8a8a8a;
  border-radius: 5px;
}

.combo svg {
  justify-self: end;
  margin-right: 3px;
  pointer-events: none;
}

.combo.wide { width: 144px; }
.combo.size { width: 62px; margin-left: 2px; }
.combo.format { width: 181px; }

.font .body {
  align-items: stretch;
  padding-left: 10px;
}

.grow {
  align-items: flex-start;
  margin-left: 8px;
  font-size: 20px;
  line-height: 24px;
}

.grow.small {
  margin-left: 13px;
  font-size: 17px;
}

.letters {
  gap: 10px;
  padding-left: 9px;
}

.letters button {
  justify-content: center;
}

.b { width: 12px; font-weight: 700; font-size: 16px; }
.letters .i { width: 20px; margin-left: 6px; font: italic 18px "Liberation Serif", serif; }
.letters .u { width: 14px; margin-left: 5px; font-size: 16px; text-decoration: underline; }

.bar {
  width: 1px;
  height: 30px;
  background: var(--line);
}

.letters .bar {
  margin: 0 -2px;
}

.alignment .body {
  padding-left: 10px;
}

.lines {
  gap: 2px;
}

.lines button {
  width: 30px;
  height: 30px;
  justify-content: center;
}

.lines .on {
  border: 1px solid #666;
  border-radius: 5px;
  background: #ececec;
}

.lines > svg {
  margin-left: 2px;
}

.group .wrap {
  height: 79px;
  margin: 6px 0 0 7px;
  padding: 2px 0 0 12px;
  border-left: 1px solid var(--line);
}

.group .wrap .row {
  gap: 5px;
}

.wrap .drop {
  margin-left: 12px;
}

.number .body {
  padding-left: 10px;
}

.nums {
  padding-left: 5px;
  gap: 8px;
}

.nums .pct { margin-left: 4px; }
.nums .comma { margin: 0 4px 0 8px; }

.styles .body {
  gap: 8px;
  padding-left: 11px;
}

.cells .body {
  gap: 12px;
  padding-left: 16px;
}

.editing .body {
  padding-left: 15px;
}

.stack.text button {
  gap: 5px;
}

.stack.text {
  width: 116px;
  margin-right: 5px;
}

.stack.text .drop {
  margin-left: 10px;
}

.editing .big + .big {
  margin-left: 8px;
}

.analysis .body,
.sensitivity .body {
  justify-content: center;
}

.analysis .big > svg,
.sensitivity .big > svg:first-child {
  margin-bottom: 3px;
}

.collapse {
  align-self: flex-end;
  margin: 0 11px 10px auto;
}

/* formula bar */
.formula-bar {
  height: 50px;
  display: flex;
  align-items: center;
  gap: 10px;
  padding: 2px 10px 0;
}

.formula-bar label,
.fx-box {
  height: 32px;
  display: flex;
  align-items: center;
  background: #fff;
  border: 1px solid var(--line);
  border-radius: 5px;
}

.formula-bar input {
  flex: 1;
}

.name-box {
  width: 127px;
  padding-right: 4px;
}

.fx-box {
  width: 92px;
  gap: 10px;
  padding-left: 6px;
  color: var(--off);
}

.fx-box .fx {
  font: italic 22px "Liberation Serif", serif;
  color: #333;
}

.formula-bar .formula {
  flex: 1;
  margin-left: -6px;
  padding-right: 4px;
}

/* workspace */
.workspace {
  flex: 1;
  display: flex;
  min-height: 0;
}

.book {
  flex: 1;
  min-width: 0;
  display: flex;
  flex-direction: column;
}

.panes {
  flex: 1;
  min-height: 0;
  display: flex;
  flex-direction: column;
  position: relative;
}

.pane {
  display: flex;
}

.pane.top {
  height: 103px;
  flex: none;
  border-bottom: 3px solid #d0d0d0;
}

.pane.bottom {
  flex: 1;
  min-height: 0;
}

.grid {
  flex: 1;
  min-width: 0;
  overflow: hidden;
}

.bottom .grid {
  border-bottom: 1px solid #e0e0e0;
}

.grid table {
  width: 100%;
  table-layout: fixed;
  border-collapse: separate;
  border-spacing: 0;
  font: 19px/20px "Liberation Sans", Arial, sans-serif;
  color: #000;
}

.bottom table {
  margin-top: -26px;
}

.c-num { width: 26px; }
.c-d { width: 97px; }
.c-f { width: 43px; }
.c-g { width: 93px; }
.c-h { width: 127px; }
.c-i { width: 286px; }
.c-l { width: 103px; }
.c-m { width: 147px; }

.grid td {
  height: 37px;
  padding: 0 0 0 3px;
  background: #fff;
  border-right: 1px solid #dedede;
  border-bottom: 1px solid #dedede;
  vertical-align: bottom;
  white-space: nowrap;
  overflow: hidden;
}

.bottom td:nth-child(2) {
  text-align: right;
  padding-right: 3px;
}

.bottom td:nth-child(4) {
  text-align: center;
  padding: 0;
}

.grid td.flush {
  padding-left: 0;
  text-align: left;
}

.grid td.mid {
  vertical-align: middle;
}

.grid th {
  padding: 0 1px 0 0;
  background: var(--chrome);
  border-right: 2px solid #a6a6a6;
  border-bottom: 1px solid #d8d8d8;
  color: #555;
  font-size: 13px;
  font-weight: 400;
  line-height: 18px;
  text-align: right;
  vertical-align: bottom;
}

.grid thead th {
  height: 17px;
  padding: 0;
  border-right: 1px solid #d8d8d8;
  border-bottom: 1px solid #a0a0a0;
  font-size: 14px;
  line-height: 15px;
  text-align: center;
  vertical-align: top;
}

.grid thead .corner {
  text-align: right;
  line-height: 10px;
  padding-right: 3px;
  vertical-align: bottom;
}

.grid thead .sel {
  background: #e0e0e0;
  color: var(--green);
  border-bottom: 2px solid var(--green);
}

.grid .titles td {
  height: 82px;
  font-weight: 700;
  line-height: 23px;
}

.bottom .sel th {
  background: #e0e0e0;
  color: var(--green);
  border-right-color: var(--green);
}

.bottom .sel td:nth-child(5) {
  background: #c6c6c6;
  border-bottom-color: #b0b0b0;
}

.grid .tall td { height: 49px; }
.grid .mid-tall td { height: 42px; }
.grid .wide-row td { height: 38px; }
.grid .short td { height: 23px; }

.grid a {
  color: #00f;
  text-decoration: underline;
}

.gap {
  display: inline-block;
}

.g20 { width: 20px; }
.g30 { width: 30px; }
.g40 { width: 40px; }
.g47 { width: 47px; }
.g56 { width: 56px; }
.g60 { width: 60px; }
.g64 { width: 64px; }
.g73 { width: 73px; }
.g77 { width: 77px; }
.g81 { width: 81px; }
.g107 { width: 107px; }
.g109 { width: 109px; }
.g133 { width: 133px; }
.g153 { width: 153px; }

a > .gap {
  height: 1px;
  vertical-align: -3px;
  background: currentColor;
}

.overlay {
  position: absolute;
  top: 0;
  left: 0;
  pointer-events: none;
}

.vscroll {
  width: 18px;
  margin: 0 4px;
  padding: 5px 0;
  display: flex;
  flex-direction: column;
  align-items: center;
  border-radius: 9px;
  background: #f5f5f5;
}

.bottom .vscroll {
  padding-bottom: 1px;
}

.vscroll .down {
  transform: rotate(180deg);
}

.thumb {
  border-radius: 6px;
  background: #6f6f6f;
}

.vscroll .thumb {
  width: 11px;
}

.top .thumb { height: 22px; margin-top: 3px; }
.rest { flex: 1; }
.bottom .thumb { height: 64px; }
.vscroll .before { flex: 40; }
.vscroll .after { flex: 10; }

.sheet-tabs {
  height: 39px;
  flex: none;
  display: flex;
  align-items: center;
  padding: 0 25px 0 28px;
  font-size: 17px;
}

.sheet-tabs .prev {
  color: #999;
  transform: rotate(90deg);
}

.sheet-tabs .next {
  margin: 0 35px 0 24px;
  transform: rotate(-90deg);
}

.sheet-tabs a {
  padding: 0 15px;
  border-right: 1px solid var(--line);
  white-space: nowrap;
}

.sheet-tabs .old {
  padding-left: 33px;
}

.sheet-tabs .last {
  padding: 0 19px 0 16px;
}

.current {
  width: 14px;
  height: 36px;
  margin: -4px 12px 0 5px;
  border-radius: 0 0 0 5px;
  background: linear-gradient(#333, #333) 11px 12px / 2px 12px no-repeat, linear-gradient(var(--green), var(--green)) 10px 30px / 4px 2px no-repeat, #fff;
}

.sheet-tabs .add {
  margin: 0 32px 0 24px;
}

.hscroll {
  flex: 1;
  height: 21px;
  margin-left: 16px;
  padding: 0 4px;
  display: flex;
  align-items: center;
  border-radius: 10px;
  background: #f5f5f5;
}

.hscroll .thumb { width: 112px; height: 11px; }
.hscroll .before { flex: 14; }
.hscroll .after { flex: 71; }
.left { transform: rotate(-90deg); }
.right { transform: rotate(90deg); }

.help {
  width: 581px;
  padding: 16px 20px 0 15px;
  border-left: 1px solid var(--line);
}

.help header {
  display: flex;
  align-items: center;
  height: 30px;
}

.help h2 {
  flex: 1;
  margin: 0;
  font-size: 25px;
  font-weight: 400;
}

.help header button:last-child {
  margin-left: 22px;
}

.help p {
  margin: 10px 0 0;
  line-height: 22px;
  white-space: nowrap;
}

/* message box over the sheet */
.dialog {
  position: absolute;
  top: 420px;
  left: 31%;
  width: 255px;
  height: 145px;
  display: flex;
  flex-direction: column;
  border: 1px solid #b4b4b4;
  border-radius: 8px;
  background: #f0f0f0;
  color: #000;
  font-size: 12px;
  box-shadow: 0 22px 40px rgba(0, 0, 0, 0.4), 0 0 30px rgba(0, 0, 0, 0.12);
}

.dialog header {
  height: 37px;
  display: flex;
  align-items: center;
  justify-content: space-between;
  padding: 0 12px 0 8px;
  border-radius: 7px 7px 0 0;
  background: #e8f6f8;
  font-size: 14px;
}

.message {
  display: flex;
  align-items: center;
  gap: 17px;
  padding: 18px 0 0 16px;
}

.message p {
  margin: 0;
}

.choices {
  display: flex;
  gap: 18px;
  margin-top: 13px;
  padding-left: 44px;
}

.choices button {
  width: 73px;
  height: 28px;
  justify-content: center;
  border: 1px solid #d0d0d0;
  border-radius: 4px;
  background: #fdfdfd;
}

.choices .ok {
  border-color: #0067c0;
  outline: 1px dotted #000;
  outline-offset: -3px;
}

/* status bar */
.status {
  height: 28px;
  display: flex;
  align-items: center;
  padding: 0 11px 0 10px;
  border-top: 1px solid #fff;
  background: #f5f5f5;
  font-size: 12px;
}

.filter {
  margin: 0 28px 0 20px;
}

.status > svg {
  margin-right: 4px;
}

.views {
  align-self: stretch;
  display: flex;
  margin-left: auto;
}

.views button {
  width: 50px;
  justify-content: center;
}

.views .on {
  background: #dfdfdf;
}

.views + .step {
  margin-left: 7px;
}

.zoom {
  appearance: none;
  width: 125px;
  height: 14px;
  margin: 0 5px;
  background: linear-gradient(#777, #777) 62px 50% / 1px 7px no-repeat, linear-gradient(#777, #777) 0 50% / 100% 1px no-repeat;
}

.zoom::-webkit-slider-thumb {
  appearance: none;
  width: 6px;
  height: 14px;
  background: #666;
}

.percent {
  width: 39px;
  text-align: right;
}

/* windows taskbar */
.taskbar {
  height: 60px;
  display: grid;
  grid-template-columns: 1fr auto 1fr;
  align-items: center;
  border-top: 1px solid #444;
  background: linear-gradient(90deg, #222 50%, #2b2125 75%);
  color: #fff;
}

.weather {
  display: flex;
  align-items: center;
  gap: 8px;
  padding-left: 24px;
  line-height: 20px;
}

.weather small {
  display: block;
  color: #d0d0d0;
  font-size: 14px;
}

.apps {
  display: flex;
  align-items: center;
  padding-right: 3px;
}

.apps button {
  position: relative;
  width: 55px;
  height: 52px;
  justify-content: center;
}

.apps .start {
  width: 60px;
}

.tb-search {
  width: 273px;
  height: 39px;
  display: flex;
  align-items: center;
  gap: 12px;
  margin: 0 4px 0 2px;
  padding: 0 2px 0 13px;
  border-radius: 20px;
  background: #f3f3f3;
}

.tb-search input {
  flex: 1;
}

.tb-search input::placeholder {
  color: #666;
}

.bag {
  width: 67px;
  height: 35px;
  display: flex;
  align-items: center;
  justify-content: center;
  border-radius: 18px;
  background: #e0e0e0;
}

.run::after {
  content: "";
  position: absolute;
  bottom: 1px;
  left: 50%;
  width: 8px;
  height: 4px;
  margin-left: -4px;
  border-radius: 2px;
  background: #999;
}

.current-app {
  background: #343032;
  border-radius: 5px;
}

.current-app::after {
  width: 20px;
  margin-left: -10px;
  background: #0a8cff;
}

.tray {
  display: flex;
  align-items: center;
  justify-content: flex-end;
  gap: 8px;
  padding-right: 23px;
}

.tray .cloud {
  margin: 0 10px 0 14px;
}

.clock {
  margin-left: 14px;
  line-height: 20px;
  text-align: right;
}

.badge {
  width: 24px;
  height: 20px;
  margin-left: 4px;
  border-radius: 10px;
  background: #0a8cff;
  color: #111;
  font-size: 12px;
  line-height: 20px;
  text-align: center;
}
```
